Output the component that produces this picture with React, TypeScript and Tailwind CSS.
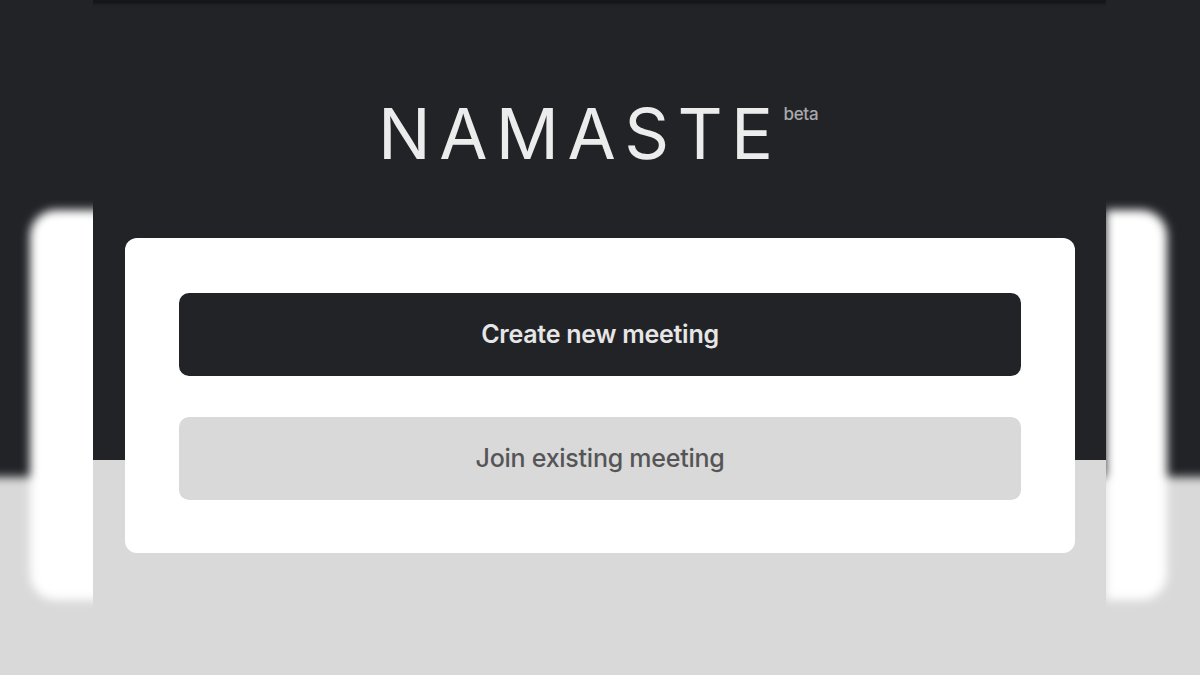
import React from "react";

function Side({ side }: { side: "left" | "right" }) {
  return (
    <div className="relative h-[675px] overflow-hidden">
      <div
        className={`h-[760px] -mt-[40px] pt-[250px] bg-[linear-gradient(to_bottom,#222327_0,#222327_517px,#d9d9d9_517px)] blur-[5px] ${
          side === "left" ? "-ml-[40px] w-[200px] pl-[70px]" : "-ml-[60px] w-[200px] pr-[70px]"
        }`}
      >
        <div
          className={`h-[390px] bg-white ${
            side === "left" ? "rounded-l-[26px]" : "ml-[60px] rounded-r-[26px] w-[61px]"
          }`}
        />
      </div>
    </div>
  );
}

export default function App() {
  return (
    <div className="w-[1200px] h-[675px] overflow-hidden flex bg-[#d9d9d9] font-['Inter',sans-serif]">
      <div className="w-[93px] shrink-0">
        <Side side="left" />
      </div>
      <div className="w-[1013px] shrink-0 h-[675px] flex flex-col bg-[linear-gradient(to_bottom,#222327_0,#222327_460px,#d9d9d9_460px)]">
        <div className="h-[3px] bg-[#15161a] shadow-[0_1px_3px_#15161a]" />
        <div className="h-[235px] flex justify-start pt-[91px] pl-[285px]">
          <div className="flex items-start">
            <span className="text-[70px] leading-[80px] font-normal tracking-[0.12em] text-[#ececec]">
              NAMASTE
            </span>
            <span className="ml-[2px] mt-[12px] text-[17px] leading-none text-[#a9a9ab] font-medium tracking-[-0.02em]">
              beta
            </span>
          </div>
        </div>
        <div className="mx-[32px] mr-[31px] h-[315px] bg-white rounded-[12px] px-[54px] pt-[55px] flex flex-col gap-[41px]">
          <button className="h-[83px] rounded-[10px] bg-[#222327] text-[#e6e6e6] text-[25px] font-semibold tracking-[-0.01em]">
            Create new meeting
          </button>
          <button className="h-[83px] rounded-[10px] bg-[#d9d9d9] text-[#555557] text-[25px] font-medium tracking-[-0.01em]">
            Join existing meeting
          </button>
        </div>
      </div>
      <div className="w-[94px] shrink-0">
        <Side side="right" />
      </div>
    </div>
  );
}
